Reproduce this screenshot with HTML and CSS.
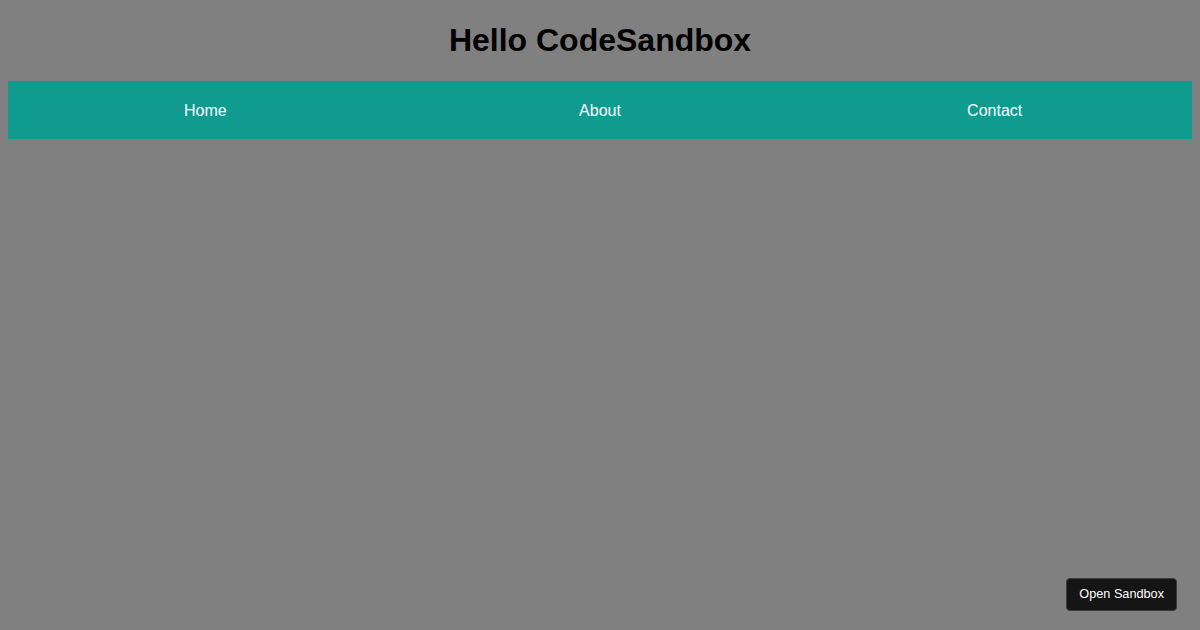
FILE: index.html
```html
<!DOCTYPE html>
<html>
<head>
<meta charset="utf-8">
<link rel="stylesheet" href="styles.css">
</head>
<body>
<h1 class="title">Hello CodeSandbox</h1>
<nav class="nav">
  <a class="nav-item" href="#">Home</a>
  <a class="nav-item" href="#">About</a>
  <a class="nav-item" href="#">Contact</a>
</nav>
<a class="open-btn" href="#">Open Sandbox</a>
</body>
</html>
```
FILE: styles.css
```css
html, body {
  height: 100%;
}
body {
  margin: 0;
  padding: 0 8px;
  background: #808080;
  font-family: "Liberation Sans", Arial, sans-serif;
  box-sizing: border-box;
}
.title {
  margin: 0;
  padding-top: 22px;
  height: 59px;
  box-sizing: border-box;
  text-align: center;
  font-size: 32px;
  font-weight: bold;
  line-height: 37px;
  color: #000;
}
.nav {
  display: flex;
  margin-top: 22px;
  height: 58px;
  background: #0f9c8f;
}
.nav-item {
  flex: 1;
  display: flex;
  align-items: center;
  justify-content: center;
  padding-top: 2px;
  color: #fff;
  text-decoration: none;
  font-size: 16px;
}
.open-btn {
  position: fixed;
  right: 23px;
  bottom: 19px;
  padding: 8px 12px;
  line-height: 15px;
  font-size: 12.7px;
  color: #fff;
  background: #151515;
  border: 1px solid #3a3a3a;
  border-radius: 4px;
  text-decoration: none;
}
```
